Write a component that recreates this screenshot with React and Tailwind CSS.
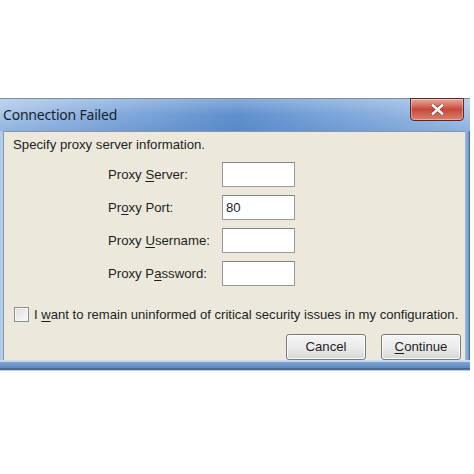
import React from "react";

const F = { fontFamily: '"Liberation Sans", Arial, sans-serif' };

function U({ children }) {
  return <span className="underline underline-offset-2 decoration-1">{children}</span>;
}

function Row({ label, value }) {
  return (
    <div className="flex items-center h-[25px]">
      <div className="w-[114px] text-[13.2px] leading-none text-[#1e1e1e]">{label}</div>
      <div className="w-[73px] h-[25px] bg-white border border-[#999999] border-t-[#848484] flex items-center pl-[3px] text-[13.2px] text-[#1e1e1e]">
        {value}
      </div>
    </div>
  );
}

function Btn({ children }) {
  return (
    <div className="w-[80px] h-[26px] rounded-[3px] border border-[#7b7b7b] bg-gradient-to-b from-[#f4f4f4] via-[#ececec] to-[#d6d6d6] shadow-[inset_0_0_0_1px_#fbfbfb] flex items-center justify-center text-[13.2px] text-[#1e1e1e]">
      {children}
    </div>
  );
}

export default function App() {
  return (
    <div className="w-[474px] h-[474px] bg-white overflow-hidden pt-[98px]" style={F}>
      <div className="w-[470px]">
        {/* title bar */}
        <div className="h-[33px] flex border-t border-[#7d8b9c] bg-gradient-to-r from-[#a9c5e8] via-[#5f8fcd] to-[#a3c2e8] relative">
          <div className="absolute inset-0 bg-gradient-to-b from-white/25 via-transparent to-[#3a6fb8]/20" />
          <div
            className="relative pl-[3px] pt-[7px] text-[14px] leading-[18px] tracking-[-0.2px] text-[#17222f]"
            style={{ fontFamily: '"Noto Sans", "Open Sans", sans-serif' }}
          >
            Connection Failed
          </div>
          <div className="flex-1" />
          <div className="relative mr-[6px] w-[54px] h-[23px] -mt-px rounded-b-[4px] border border-[#5b2a24] bg-gradient-to-b from-[#e6a89c] via-[#c8473a] to-[#d9806f] flex items-center justify-center shadow-[inset_0_0_0_1px_rgba(255,255,255,0.35)]">
            <svg width="13" height="11" viewBox="0 0 13 11">
              <path d="M2 1.5 L11 9.5 M11 1.5 L2 9.5" stroke="#5a1f18" strokeWidth="4" strokeLinecap="square" opacity="0.5" />
              <path d="M2 1.5 L11 9.5 M11 1.5 L2 9.5" stroke="#ffffff" strokeWidth="2.6" strokeLinecap="square" />
            </svg>
          </div>
        </div>
        {/* body */}
        <div className="flex">
          <div className="w-[3px] bg-[#b3cbea]" />
          <div className="w-[462px] h-[229px] bg-[#ece9dc] border-t border-l border-[#8797aa] flex flex-col text-[#1e1e1e]">
            <div className="mt-[6px] ml-[9px] text-[13.2px] leading-[14px]">Specify proxy server information.</div>
            <div className="mt-[10px] ml-[104px] flex flex-col gap-[8px]">
              <Row label={<>Proxy <U>S</U>erver:</>} />
              <Row label={<>Pr<U>o</U>xy Port:</>} value="80" />
              <Row label={<>Proxy <U>U</U>sername:</>} />
              <Row label={<>Proxy P<U>a</U>ssword:</>} />
            </div>
            <div className="mt-[21px] ml-[10px] flex items-center h-[15px]">
              <div className="w-[15px] h-[15px] border border-[#8e8f8f] bg-gradient-to-br from-[#dcdcdc] to-[#fbfbfb] shadow-[inset_0_0_0_1px_#f4f4f4]" />
              <div className="ml-[5px] text-[13.1px] leading-none whitespace-nowrap">
                I <U>w</U>ant to remain uninformed of critical security issues in my configuration.
              </div>
            </div>
            <div className="mt-[12px] flex justify-end gap-[15px] pr-[4px]">
              <Btn>Cancel</Btn>
              <Btn><><U>C</U>ontinue</></Btn>
            </div>
          </div>
          <div className="w-[5px] bg-gradient-to-r from-[#9fbde4] to-[#6f95c6] border-r border-[#4f6f99]" />
        </div>
        {/* bottom frame */}
        <div className="h-[11px] flex flex-col">
          <div className="h-[2px] bg-[#c9d8ec]" />
          <div className="h-[6px] bg-gradient-to-b from-[#7ea3d4] to-[#5f89c2]" />
          <div className="h-[2px] bg-[#4a6b97]" />
          <div className="h-[1px] bg-[#c3cfdf]" />
        </div>
      </div>
    </div>
  );
}
